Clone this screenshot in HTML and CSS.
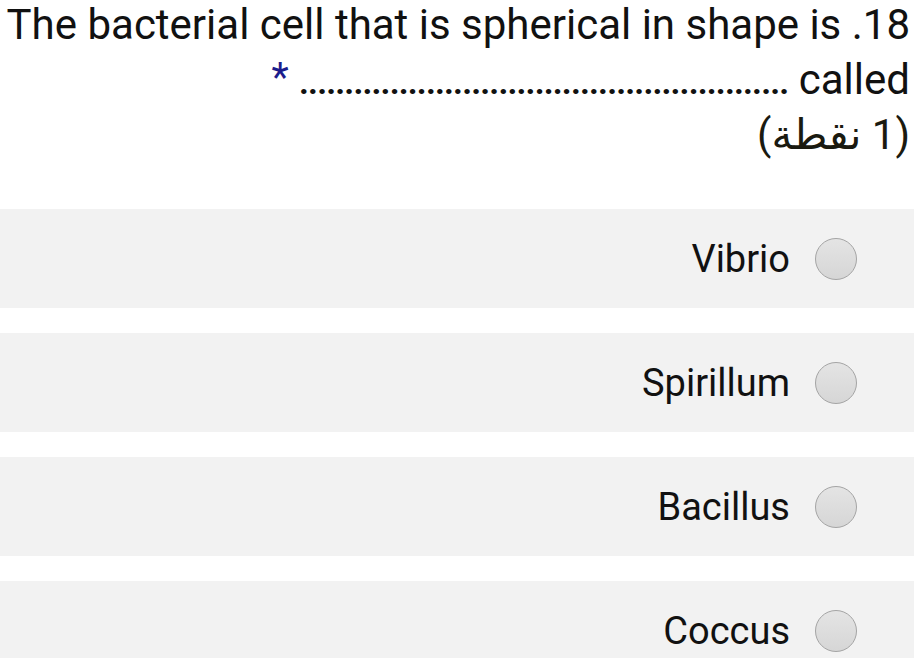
FILE: index.html
```html
<!DOCTYPE html>
<html lang="en">
<head>
<meta charset="utf-8">
<title>Question 18</title>
<link rel="stylesheet" href="styles.css">
</head>
<body>
<div class="question">
  <div class="q-line">The bacterial cell that is spherical in shape is .18</div>
  <div class="q-line"><span class="req">*</span> <span class="dots">......................................................</span> called</div>
  <div class="q-line points" dir="rtl">(1 نقطة)</div>
</div>
<div class="options">
  <label class="option"><span class="opt-text">Vibrio</span><span class="radio"></span></label>
  <label class="option"><span class="opt-text">Spirillum</span><span class="radio"></span></label>
  <label class="option"><span class="opt-text">Bacillus</span><span class="radio"></span></label>
  <label class="option"><span class="opt-text">Coccus</span><span class="radio"></span></label>
</div>
</body>
</html>
```
FILE: styles.css
```css
html, body {
  margin: 0;
  padding: 0;
  background: #ffffff;
}
body {
  font-family: Roboto, "Noto Sans", "DejaVu Sans", sans-serif;
  color: #111111;
  width: 914px;
  height: 658px;
  overflow: hidden;
}
.question {
  margin-top: -3px;
  padding-right: 4px;
  text-align: right;
  font-size: 42px;
  line-height: 55px;
  margin-bottom: 47px;
}
.q-line {
  white-space: nowrap;
  height: 55px;
}
.req {
  color: #1c1c8c;
  font-size: 40px;
  line-height: 0;
  vertical-align: 3px;
}
.dots {
  font-size: 34px;
  line-height: 0;
  font-weight: 700;
  letter-spacing: -0.8px;
}
.points {
  text-align: right;
  font-family: Roboto, "DejaVu Sans", sans-serif;
  color: #1a1a10;
}
.options {
  display: flex;
  flex-direction: column;
  gap: 25px;
}
.option {
  flex: none;
  height: 99px;
  background: #f2f2f2;
  display: flex;
  align-items: center;
  justify-content: flex-end;
  gap: 25px;
  padding-right: 57px;
  font-size: 38px;
  color: #111111;
}
.radio {
  width: 40px;
  height: 40px;
  border-radius: 50%;
  border: 1px solid #a4a4a4;
  background: linear-gradient(#e4e4e4, #d6d6d6);
  box-sizing: content-box;
}
```
